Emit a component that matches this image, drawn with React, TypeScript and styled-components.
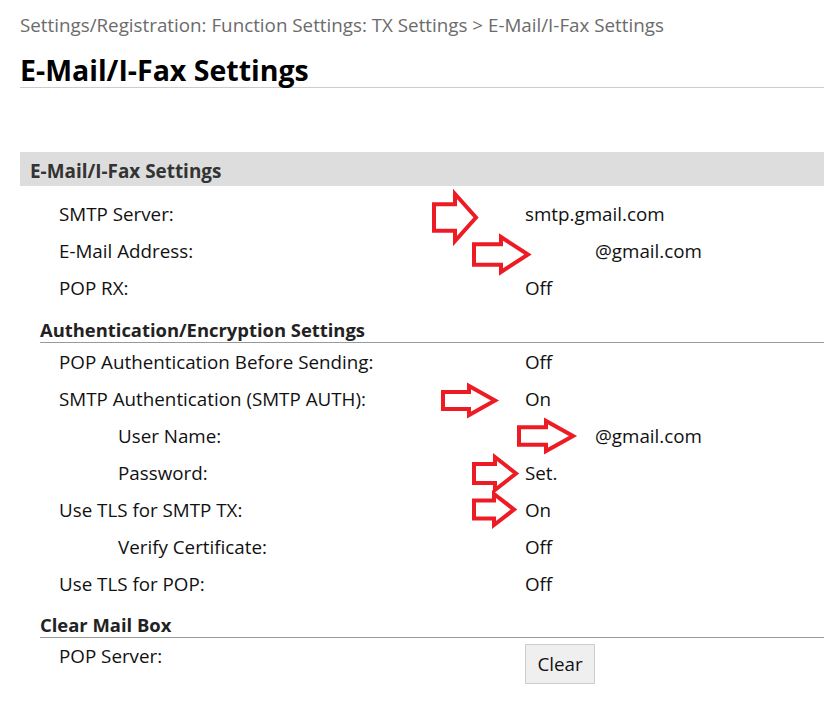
import React from "react";
import styled, { createGlobalStyle } from "styled-components";

const GlobalStyle = createGlobalStyle`
  html, body {
    margin: 0;
    padding: 0;
    background: #ffffff;
  }
  body {
    font-family: "Open Sans", "Noto Sans", "Liberation Sans", sans-serif;
    color: #111111;
    overflow: hidden;
  }
`;

const Page = styled.div`
  position: relative;
  padding-left: 20px;
  width: 804px;
`;

const Breadcrumb = styled.div`
  padding-top: 13px;
  font-size: 18.8px;
  line-height: 24px;
  color: #6b6b6b;
  white-space: nowrap;
`;

const Title = styled.h1`
  margin: 16px 0 0;
  font-size: 28.5px;
  line-height: 34px;
  font-weight: 700;
  color: #000;
  border-bottom: 1px solid #cccccc;
`;

const SectionBar = styled.div`
  margin-top: 64px;
  height: 34px;
  padding: 4px 0 0 10px;
  box-sizing: border-box;
  background: #dddddd;
  font-size: 18.9px;
  font-weight: 700;
  line-height: 30px;
  color: #333333;
`;

const Rows = styled.div<{ $top?: number }>`
  margin-top: ${(p) => p.$top ?? 0}px;
`;

const Row = styled.div`
  display: grid;
  grid-template-columns: 505px 1fr;
  min-height: 37px;
  font-size: 18.8px;
  line-height: 37px;
`;

const Label = styled.div<{ $level: number }>`
  padding-left: ${(p) => (p.$level === 2 ? 98 : 39)}px;
  white-space: nowrap;
`;

const Value = styled.div`
  white-space: nowrap;
`;

const Hidden = styled.span`
  display: inline-block;
  width: 70px;
`;

const SubHeader = styled.div<{ $top: number }>`
  margin: ${(p) => p.$top}px 0 0 20px;
  font-size: 18.4px;
  font-weight: 700;
  line-height: 24px;
  color: #222222;
  border-bottom: 1px solid #999999;
`;

const ClearButton = styled.button`
  margin-top: 6px;
  width: 70px;
  height: 40px;
  background: #efefef;
  border: 1px solid #cccccc;
  border-radius: 0;
  font-family: inherit;
  font-size: 18.8px;
  color: #111;
  padding: 0;
`;

const Overlay = styled.svg`
  position: absolute;
  left: 0;
  top: 0;
  pointer-events: none;
`;

type ArrowProps = { x: number; y: number; w: number; h: number };

const arrows: ArrowProps[] = [
  { x: 432, y: 192, w: 46, h: 51 },
  { x: 472, y: 235, w: 58, h: 39 },
  { x: 441, y: 384, w: 56, h: 33 },
  { x: 517, y: 419, w: 58, h: 34 },
  { x: 472, y: 455, w: 46, h: 37 },
  { x: 472, y: 492, w: 44, h: 35 },
];

const arrowPoints = ({ x, y, w, h }: ArrowProps) => {
  const i = 2;
  const l = x + i;
  const r = x + w - i;
  const t = y + i;
  const b = y + h - i;
  const mid = x + w * 0.5;
  const ty = y + h * 0.24;
  const by = y + h * 0.76;
  const cy = y + h / 2;
  return [
    [l, ty],
    [mid, ty],
    [mid, t],
    [r, cy],
    [mid, b],
    [mid, by],
    [l, by],
  ]
    .map((p) => p.join(","))
    .join(" ");
};

const rowsMain = [
  { label: "SMTP Server:", value: "smtp.gmail.com", level: 1 },
  { label: "E-Mail Address:", value: "@gmail.com", level: 1, redacted: true },
  { label: "POP RX:", value: "Off", level: 1 },
];

const rowsAuth = [
  { label: "POP Authentication Before Sending:", value: "Off", level: 1 },
  { label: "SMTP Authentication (SMTP AUTH):", value: "On", level: 1 },
  { label: "User Name:", value: "@gmail.com", level: 2, redacted: true },
  { label: "Password:", value: "Set.", level: 2 },
  { label: "Use TLS for SMTP TX:", value: "On", level: 1 },
  { label: "Verify Certificate:", value: "Off", level: 2 },
  { label: "Use TLS for POP:", value: "Off", level: 1 },
];

type RowData = { label: string; value: string; level: number; redacted?: boolean };

const SettingRow = ({ label, value, level, redacted }: RowData) => (
  <Row>
    <Label $level={level}>{label}</Label>
    <Value>
      {redacted && <Hidden />}
      {value}
    </Value>
  </Row>
);

export default function App() {
  return (
    <>
      <GlobalStyle />
      <Page>
        <Breadcrumb>
          Settings/Registration: Function Settings: TX Settings &gt; E-Mail/I-Fax Settings
        </Breadcrumb>
        <Title>E-Mail/I-Fax Settings</Title>

        <SectionBar>E-Mail/I-Fax Settings</SectionBar>
        <Rows $top={10}>
          {rowsMain.map((r) => (
            <SettingRow key={r.label} {...r} />
          ))}
        </Rows>

        <SubHeader $top={11}>Authentication/Encryption Settings</SubHeader>
        <Rows $top={1}>
          {rowsAuth.map((r) => (
            <SettingRow key={r.label} {...r} />
          ))}
        </Rows>

        <SubHeader $top={10}>Clear Mail Box</SubHeader>
        <Row>
          <Label $level={1}>POP Server:</Label>
          <Value>
            <ClearButton>Clear</ClearButton>
          </Value>
        </Row>
      </Page>

      <Overlay width={824} height={703}>
        {arrows.map((a, i) => (
          <polygon
            key={i}
            points={arrowPoints(a)}
            fill="none"
            stroke="#ed1c24"
            strokeWidth={4}
            strokeLinejoin="miter"
          />
        ))}
      </Overlay>
    </>
  );
}
